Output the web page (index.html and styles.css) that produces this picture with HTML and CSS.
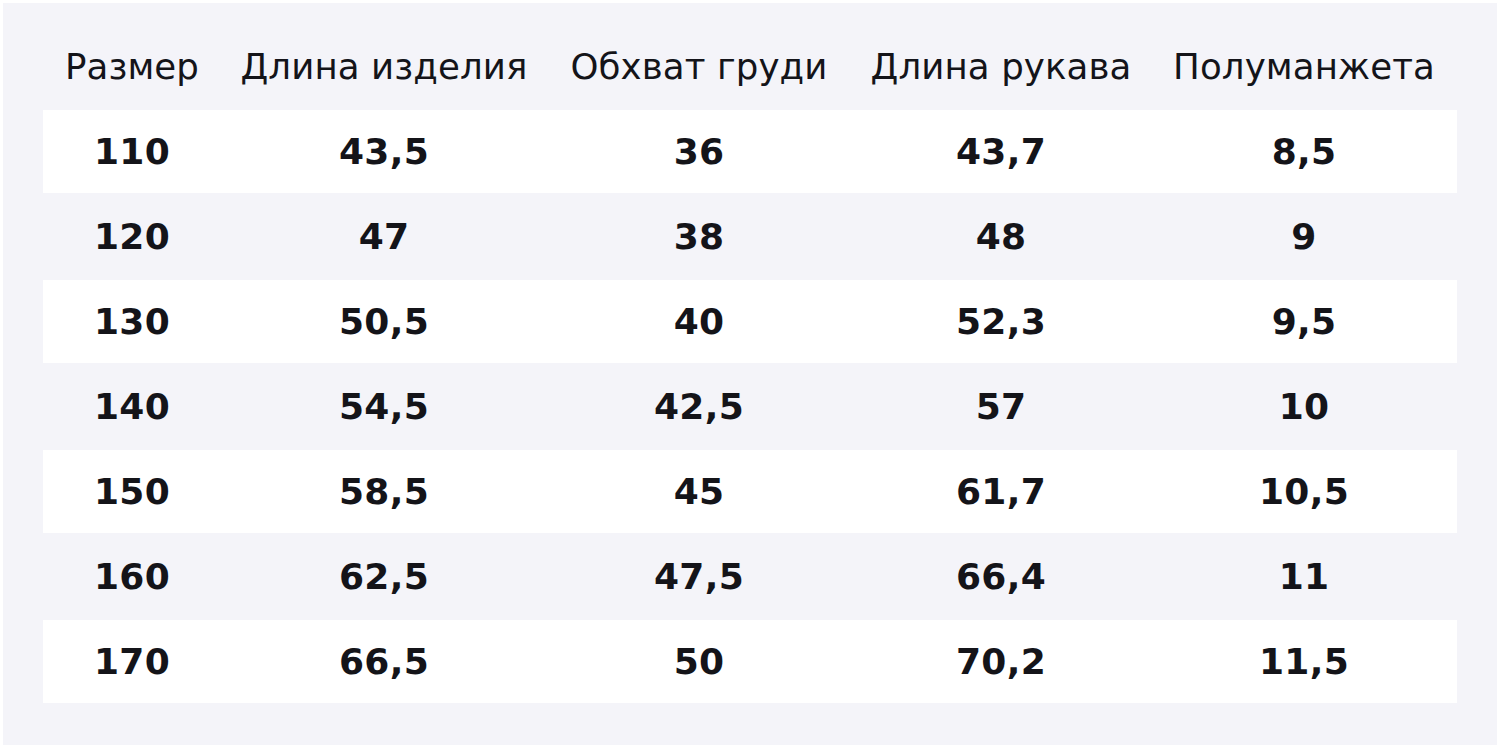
FILE: index.html
```html
<!DOCTYPE html>
<html lang="ru">
<head>
<meta charset="utf-8">
<link rel="stylesheet" href="styles.css">
</head>
<body>
<div class="sheet">
  <table class="sizes">
    <colgroup>
      <col class="c1"><col class="c2"><col class="c3"><col class="c4"><col class="c5">
    </colgroup>
    <thead>
      <tr><th>Размер</th><th>Длина изделия</th><th>Обхват груди</th><th>Длина рукава</th><th>Полуманжета</th></tr>
    </thead>
    <tbody>
      <tr class="odd"><td>110</td><td>43,5</td><td>36</td><td>43,7</td><td>8,5</td></tr>
      <tr class="even"><td>120</td><td>47</td><td>38</td><td>48</td><td>9</td></tr>
      <tr class="odd"><td>130</td><td>50,5</td><td>40</td><td>52,3</td><td>9,5</td></tr>
      <tr class="even"><td>140</td><td>54,5</td><td>42,5</td><td>57</td><td>10</td></tr>
      <tr class="odd"><td>150</td><td>58,5</td><td>45</td><td>61,7</td><td>10,5</td></tr>
      <tr class="even"><td>160</td><td>62,5</td><td>47,5</td><td>66,4</td><td>11</td></tr>
      <tr class="odd"><td>170</td><td>66,5</td><td>50</td><td>70,2</td><td>11,5</td></tr>
    </tbody>
  </table>
</div>
</body>
</html>
```
FILE: styles.css
```css
html, body {
  margin: 0;
  padding: 0;
  background: #ffffff;
}
body {
  padding: 3px;
  font-family: "DejaVu Sans", "Noto Sans", sans-serif;
  color: #141419;
}
.sheet {
  box-sizing: border-box;
  height: 742px;
  background: #f4f4f9;
  padding: 22px 40px 42px;
}
.sizes {
  width: 1414px;
  border-collapse: collapse;
  table-layout: fixed;
}
.c1 { width: 178px; }
.c2 { width: 326px; }
.c3 { width: 304px; }
.c4 { width: 300px; }
.c5 { width: 306px; }
.sizes th, .sizes td {
  padding: 0;
  text-align: center;
  line-height: 1;
}
.sizes th {
  font-weight: normal;
  font-size: 35.6px;
  letter-spacing: 0.1px;
  height: 85px;
  padding-bottom: 2px;
  box-sizing: border-box;
}
.sizes td {
  font-weight: bold;
  font-size: 36px;
  letter-spacing: 0.3px;
}
.odd { background: #ffffff; }
.odd td { height: 83px; }
.even td { height: 87px; }
```
